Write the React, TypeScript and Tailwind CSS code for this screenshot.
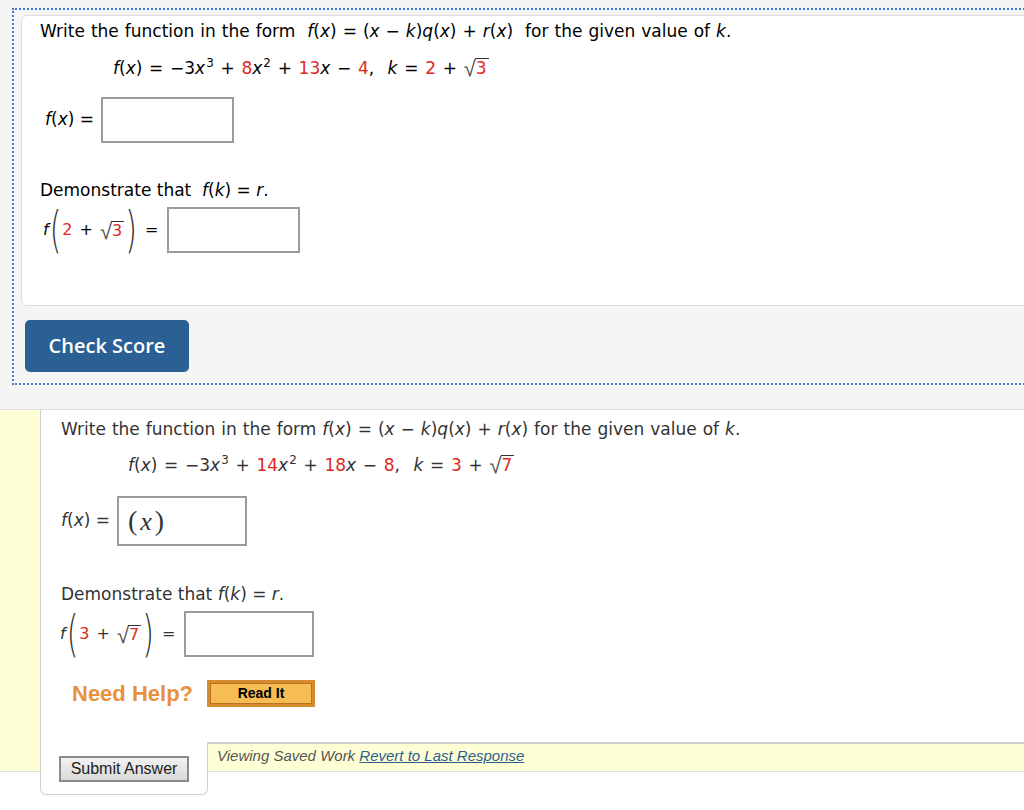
import React from "react";

const red = "text-[#e0281e]";

function Sqrt(props: { n: string }) {
  return (
    <span className="inline-flex items-end align-baseline">
      <span className="text-[22px] leading-[20px] text-[#555] font-light relative top-[2px] -mr-[1px]">√</span>
      <span className={`border-t border-[#333] leading-[18px] pl-[1px] pr-[2px] ${red}`}>{props.n}</span>
    </span>
  );
}

function I(props: { children: React.ReactNode }) {
  return <span className="italic">{props.children}</span>;
}

function Sup(props: { children: React.ReactNode }) {
  return <sup className="text-[12px] relative -top-[7px] ml-[1px]">{props.children}</sup>;
}

function BigParen(props: { ch: string }) {
  return (
    <span className="inline-block text-[30px] font-extralight scale-y-[1.65] leading-none mx-[1px] text-[#333]">
      {props.ch}
    </span>
  );
}

function AnswerBox(props: { w: string; h: string }) {
  return <div className={`${props.w} ${props.h} border-2 border-[#9b9b9b] bg-white`} />;
}

function Question(props: { a: string; b: string; c: string; kk: string; r: string; compact?: boolean }) {
  const gap = props.compact ? " " : "  ";
  return (
    <>
      <div className="h-6 leading-6 whitespace-pre [word-spacing:0.6px]">
        Write the function in the form{gap}
        <I>f</I>(<I>x</I>) = (<I>x</I> − <I>k</I>)<I>q</I>(<I>x</I>) + <I>r</I>(<I>x</I>)
        {gap}for the given value of <I>k</I>.
      </div>
      <div
        className={`h-6 leading-6 whitespace-pre [word-spacing:1.3px] ${props.compact ? "mt-3 ml-[67px]" : "mt-[13px] ml-[73px]"}`}
      >
        <I>f</I>(<I>x</I>) = −3<I>x</I>
        <Sup>3</Sup> + <span className={red}>{props.a}</span>
        <I>x</I>
        <Sup>2</Sup> + <span className={red}>{props.b}</span>
        <I>x</I> − <span className={red}>{props.c}</span>,  <I>k</I> = <span className={red}>{props.kk}</span> +{" "}
        <Sqrt n={props.r} />
      </div>
    </>
  );
}

function Evaluate(props: { kk: string; r: string }) {
  return (
    <span className="flex items-center text-[16px] whitespace-pre">
      <I>f</I>
      <BigParen ch="(" />
      <span className={red}>{props.kk}</span>
      <span className="mx-[7px]">+</span>
      <Sqrt n={props.r} />
      <BigParen ch=")" />
      <span className="ml-[7px] mr-[9px]">=</span>
    </span>
  );
}

export default function App() {
  return (
    <div className="w-[1024px] min-h-[810px] bg-white overflow-hidden font-['DejaVu_Sans',Verdana,sans-serif] text-[17px]">
      {/* saved question, scored */}
      <div className="bg-[#f5f5f5] pt-2 pb-6">
        <div className="ml-3 w-[1040px] border-2 border-dotted border-[#3b7ddd] pl-[7px] pt-[5px] pb-[11px]">
          <div className="h-[291px] bg-white border border-[#dcdcdc] rounded-l-[6px] pl-[18px] pt-[3px] text-black">
            <Question a="8" b="13" c="4" kk="2" r="3" />
            <div className="mt-[17px] h-[46px] flex items-center">
              <span className="ml-[5px] mr-[7px] whitespace-pre">
                <I>f</I>(<I>x</I>) =
              </span>
              <AnswerBox w="w-[133px]" h="h-[46px]" />
            </div>
            <div className="mt-[35px] h-6 leading-6 whitespace-pre">
              Demonstrate that  <I>f</I>(<I>k</I>) = <I>r</I>.
            </div>
            <div className="mt-[5px] h-[46px] flex items-center pl-[3px]">
              <Evaluate kk="2" r="3" />
              <AnswerBox w="w-[133px]" h="h-[46px]" />
            </div>
          </div>
          <button className="mt-[14px] ml-1 w-[164px] h-[52px] rounded-[5px] bg-[#2a6094] text-white text-[20px] font-semibold font-['Open_Sans',sans-serif]">
            Check Score
          </button>
        </div>
      </div>

      {/* current question */}
      <div className="flex border-t border-b border-[#dddddd] bg-[#ffffd6]">
        <div className="w-10 shrink-0" />
        <div className="flex-1 flex flex-col">
          <div className="bg-white border-l border-[#d0d0d0] pl-5 pt-[7px] pb-[35px] text-[#333]">
            <Question a="14" b="18" c="8" kk="3" r="7" compact />
            <div className="mt-[19px] h-[50px] flex items-center">
              <span className="mr-[7px] whitespace-pre">
                <I>f</I>(<I>x</I>) =
              </span>
              <div className="w-[130px] h-[50px] border-2 border-[#9b9b9b] bg-white flex items-center pl-[9px] font-['Liberation_Serif',serif] text-[28px] text-[#333]">
                <span className="font-light">(</span>
                <span className="italic px-[3px] text-[26px]">x</span>
                <span className="font-light">)</span>
              </div>
            </div>
            <div className="mt-[36px] h-6 leading-6 whitespace-pre">
              Demonstrate that <I>f</I>(<I>k</I>) = <I>r</I>.
            </div>
            <div className="mt-[5px] h-[46px] flex items-center -ml-[1px]">
              <Evaluate kk="3" r="7" />
              <AnswerBox w="w-[130px]" h="h-[46px]" />
            </div>
            <div className="mt-[23px] h-[27px] flex items-center font-['Liberation_Sans',Arial,sans-serif]">
              <span className="ml-[11px] text-[22px] font-bold text-[#e8913a]">Need Help?</span>
              <button className="ml-[14px] w-[108px] h-[27px] bg-[#d68b31] p-[3px]">
                <span className="flex items-center justify-center w-full h-full bg-[#f6bd55] border border-[#b8731f] text-[14px] font-bold text-black">
                  Read It
                </span>
              </button>
            </div>
          </div>
          <div className="flex h-[29px]">
            <div className="relative z-10 w-[168px] h-[53px] -mb-[24px] shrink-0 bg-white border-l border-r border-b border-[#d0d0d0] rounded-b-[6px] pl-[18px] pt-[14px]">
              <button className="w-[130px] h-[26px] border-2 border-[#8a8a8a] bg-gradient-to-b from-[#f2f2f2] to-[#d9d9d9] text-[16px] text-[#222] font-['Liberation_Sans',Arial,sans-serif] leading-none">
                Submit Answer
              </button>
            </div>
            <div className="flex-1 border-t-2 border-[#cfcfcf] bg-[#ffffd6] pl-[9px] pt-[1px] text-[15px] italic text-[#555] font-['Liberation_Sans',Arial,sans-serif]">
              Viewing Saved Work <a className="text-[#2b5f8e] underline">Revert to Last Response</a>
            </div>
          </div>
        </div>
      </div>
    </div>
  );
}
